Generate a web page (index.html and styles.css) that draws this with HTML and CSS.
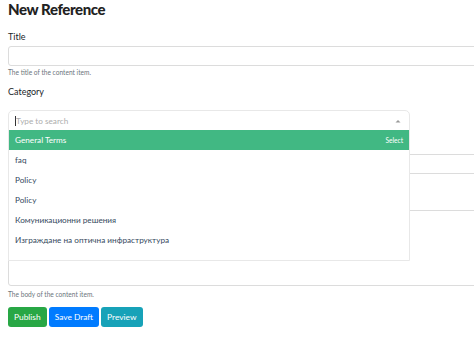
FILE: index.html
```html
<!DOCTYPE html>
<html lang="en">
<head>
    <meta charset="UTF-8">
    <title>New Reference</title>
    <link rel="stylesheet" href="styles.css">
</head>
<body>
    <div id="page">
        <h2>New Reference</h2>
        <div class="form-group">
            <label>Title</label>
            <input class="form-control" type="text">
            <small class="help">The title of the content item.</small>
        </div>
        <div class="form-group category">
            <label>Category</label>
            <div class="select-box">
                <div class="multiselect">
                    <div class="ms-search">
                        <span class="cursor"></span><span class="placeholder">Type to search</span>
                        <svg class="caret" width="8" height="6" viewBox="0 0 8 6"><path d="M1.5 4.5 L4 2 L6.5 4.5 Z" fill="#999"/></svg>
                    </div>
                    <ul class="ms-options">
                        <li class="active"><span>General Terms</span><span class="hint">Select</span></li>
                        <li>faq</li>
                        <li>Policy</li>
                        <li>Policy</li>
                        <li>Комуникационни решения</li>
                        <li>Изграждане на оптична инфраструктура</li>
                    </ul>
                </div>
            </div>
        </div>
        <div class="form-group">
            <input class="form-control slug" type="text">
        </div>
        <div class="form-group">
            <label class="hidden-label">Body</label>
            <textarea class="form-control body"></textarea>
            <small class="help body-help">The body of the content item.</small>
        </div>
        <div class="actions">
            <button class="btn publish">Publish</button>
            <button class="btn draft">Save Draft</button>
            <button class="btn preview">Preview</button>
        </div>
    </div>
</body>
</html>
```

FILE: styles.css
```css
html, body {
    margin: 0;
    overflow: hidden;
}
body {
    font-family: Lato, "Noto Sans", sans-serif;
    color: #212529;
    background: #fff;
}
#page {
    width: 540px;
    padding: 0 8px;
}
h2 {
    font-size: 15px;
    letter-spacing: -0.4px;
    font-weight: 900;
    margin: 0;
    line-height: 18px;
    color: #222;
}
.form-group {
    display: flex;
    flex-direction: column;
}
label {
    font-size: 9px;
    line-height: 12px;
    margin-top: 13px;
    margin-bottom: 3px;
}
.category label {
    margin-top: 9px;
    margin-bottom: 12px;
}
.form-control {
    box-sizing: border-box;
    height: 20px;
    border: 1px solid #dcdcdc;
    border-radius: 3px;
    background: #fff;
    margin: 0;
    font: inherit;
}
.help {
    font-size: 6.6px;
    color: #6c757d;
    line-height: 9px;
    margin-top: 2px;
}
.select-box {
    position: relative;
    width: 402px;
    height: 20px;
}
.slug {
    margin-top: 24px;
}
.hidden-label {
    visibility: hidden;
    margin-top: 12px;
    margin-bottom: 12px;
}
.body {
    height: 76px;
    resize: none;
}
.body-help {
    margin-top: 4px;
}
.multiselect {
    position: absolute;
    left: 0;
    top: 0;
    width: 402px;
    box-sizing: border-box;
    background: #fff;
    border: 1px solid #e8e8e8;
    border-radius: 5px 5px 0 0;
    z-index: 2;
    font-size: 8.2px;
    color: #35495e;
}
.ms-search {
    display: flex;
    align-items: center;
    height: 19px;
    padding: 0 6px;
}
.cursor {
    width: 1px;
    height: 10px;
    background: #333;
}
.placeholder {
    color: #adadad;
    flex: 1;
}
.caret {
    margin-right: 1px;
}
.ms-options {
    list-style: none;
    margin: 0;
    padding: 0 0 10px;
}
.ms-options li {
    height: 20px;
    line-height: 20px;
    padding: 0 6px;
    display: flex;
    justify-content: space-between;
}
.ms-options li.active {
    background: #41b883;
    color: #fff;
}
.hint {
    font-size: 6.6px;
}
.actions {
    display: flex;
    gap: 2px;
    margin-top: 8px;
}
.btn {
    font-family: inherit;
    font-size: 8.4px;
    color: #fff;
    border: none;
    border-radius: 3px;
    height: 20px;
    padding: 0 6px;
}
.publish { background: #28a745; }
.draft { background: #007bff; }
.preview { background: #17a2b8; }
```
